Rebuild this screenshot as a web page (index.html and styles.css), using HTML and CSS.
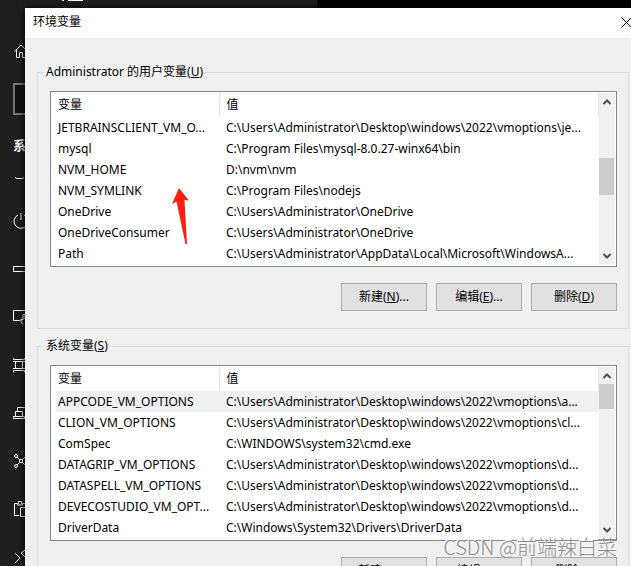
FILE: index.html
```html
<!DOCTYPE html>
<html lang="zh-CN">
<head>
<meta charset="utf-8">
<title>环境变量</title>
<link rel="stylesheet" href="styles.css">
</head>
<body>
<div class="desktop">
  <nav class="settings" aria-label="设置">
    <div class="app-name"><svg width="24" height="3" viewBox="0 0 24 3"><path d="M0 .5h2M6 .5h15" stroke="#fff" stroke-width="1"/></svg></div>
    <a class="item" href="#" aria-label="主页"><svg viewBox="0 0 16 16"><path d="M1.500 8.500 8 2l6.500 6.500M3.500 7v7.500h3v-5h3v5h3V7"/></svg></a>
    <input class="search" type="text" aria-label="查找设置">
    <h2 class="section">系统</h2>
    <a class="item clipped" href="#" aria-label="声音"><svg viewBox="0 0 16 16"><path d="M2 9.500q1 1 3 1h3q2 0 3-1"/></svg></a>
    <a class="item" href="#" aria-label="电源和睡眠"><svg viewBox="0 0 16 16"><path d="M5 2a7 7 0 1 0 6 0M8 0v7"/></svg></a>
    <a class="item" href="#" aria-label="存储"><svg viewBox="0 0 16 16"><path d="M.5 5.500h15v5H.5z"/></svg></a>
    <a class="item" href="#" aria-label="平板模式"><svg viewBox="0 0 16 16"><path d="M7 11.500H.5v-10h15M10 15.500q-3-3-2-5.500l2 1V6q1-2 2 0v4"/></svg></a>
    <a class="item" href="#" aria-label="多任务处理"><svg viewBox="0 0 16 16"><path d="M.5 1v1.500h11V1M.5 15.500V13.500h11v2M0 4.500h2.500v7H0M2.500 4.500h7v7h-7M12 4.500h-2.500v7H12"/></svg></a>
    <a class="item" href="#" aria-label="投影到此电脑"><svg viewBox="0 0 16 16"><path d="M4.500 6V2.500h11M2.500 11V6.500h7V11M.5 11.500h11v2H.5z"/></svg></a>
    <a class="item" href="#" aria-label="体验共享"><svg viewBox="0 0 16 16"><path d="m4 4 3 3m2 2 3 3M12 4 9 7M7 9l-3 3M6.500 6.500h3v3h-3z"/><circle cx="3" cy="3" r="1.500"/><circle cx="3" cy="13" r="1.500"/></svg></a>
    <a class="item" href="#" aria-label="剪贴板"><svg viewBox="0 0 16 16"><path d="M6 14.500H1.500v-12H4m6 0h2.500V6M4.500 4V2.500h1v-2h3v2h1V4zM7.500 6.500h7v9h-7z"/></svg></a>
    <a class="item" href="#" aria-label="远程桌面"><svg viewBox="0 0 16 16"><path d="m2 4 5 5-5 5M12 1 8 4l4 4"/></svg></a>
  </nav>

  <main class="dialog" role="dialog" aria-labelledby="title">
    <header class="titlebar">
      <h1 id="title">环境变量</h1>
      <button class="close" type="button" aria-label="关闭"><svg viewBox="0 0 11 11"><path d="m.5.5 10 10m0-10-10 10"/></svg></button>
    </header>
    <div class="content">
      <fieldset class="group">
        <legend>Administrator 的用户变量(<u>U</u>)</legend>
        <div class="list">
          <table>
            <thead><tr><th scope="col">变量</th><th scope="col">值</th></tr></thead>
            <tbody>
              <tr><td>JETBRAINSCLIENT_VM_O...</td><td>C:\Users\Administrator\Desktop\windows\2022\vmoptions\je...</td></tr>
              <tr><td>mysql</td><td>C:\Program Files\mysql-8.0.27-winx64\bin</td></tr>
              <tr><td>NVM_HOME</td><td>D:\nvm\nvm</td></tr>
              <tr><td>NVM_SYMLINK</td><td>C:\Program Files\nodejs</td></tr>
              <tr><td>OneDrive</td><td>C:\Users\Administrator\OneDrive</td></tr>
              <tr><td>OneDriveConsumer</td><td>C:\Users\Administrator\OneDrive</td></tr>
              <tr><td>Path</td><td>C:\Users\Administrator\AppData\Local\Microsoft\WindowsA...</td></tr>
            </tbody>
          </table>
          <div class="scrollbar">
            <button type="button" aria-label="向上滚动"><svg viewBox="0 0 8 6"><path d="M.5 5 4 1.500 7.500 5"/></svg></button>
            <div class="track"><div class="thumb middle"></div></div>
            <button type="button" aria-label="向下滚动"><svg viewBox="0 0 8 6"><path d="M.5 1 4 4.500 7.500 1"/></svg></button>
          </div>
          <svg class="arrow" viewBox="0 0 18 57"><path fill="#ff1e10" d="M7 0 17 12.500 12.500 12 15 56H13.500L4.500 13.500 0 16z"/></svg>
        </div>
        <div class="actions">
          <button type="button">新建(<u>N</u>)...</button>
          <button type="button">编辑(<u>E</u>)...</button>
          <button type="button">删除(<u>D</u>)</button>
        </div>
      </fieldset>

      <fieldset class="group">
        <legend>系统变量(<u>S</u>)</legend>
        <div class="list">
          <table>
            <thead><tr><th scope="col">变量</th><th scope="col">值</th></tr></thead>
            <tbody>
              <tr class="selected"><td>APPCODE_VM_OPTIONS</td><td>C:\Users\Administrator\Desktop\windows\2022\vmoptions\a...</td></tr>
              <tr><td>CLION_VM_OPTIONS</td><td>C:\Users\Administrator\Desktop\windows\2022\vmoptions\cl...</td></tr>
              <tr><td>ComSpec</td><td>C:\WINDOWS\system32\cmd.exe</td></tr>
              <tr><td>DATAGRIP_VM_OPTIONS</td><td>C:\Users\Administrator\Desktop\windows\2022\vmoptions\d...</td></tr>
              <tr><td>DATASPELL_VM_OPTIONS</td><td>C:\Users\Administrator\Desktop\windows\2022\vmoptions\d...</td></tr>
              <tr><td>DEVECOSTUDIO_VM_OPT...</td><td>C:\Users\Administrator\Desktop\windows\2022\vmoptions\d...</td></tr>
              <tr><td>DriverData</td><td>C:\Windows\System32\Drivers\DriverData</td></tr>
            </tbody>
          </table>
          <div class="scrollbar">
            <button type="button" aria-label="向上滚动"><svg viewBox="0 0 8 6"><path d="M.5 5 4 1.500 7.500 5"/></svg></button>
            <div class="track"><div class="thumb top"></div></div>
            <button type="button" aria-label="向下滚动"><svg viewBox="0 0 8 6"><path d="M.5 1 4 4.500 7.500 1"/></svg></button>
          </div>
        </div>
        <div class="actions">
          <button type="button">新建(<u>W</u>)...</button>
          <button type="button">编辑(<u>I</u>)...</button>
          <button type="button">删除(<u>L</u>)</button>
        </div>
      </fieldset>
    </div>
  </main>
  <p class="watermark">CSDN @前端辣白菜</p>
</div>
</body>
</html>
```

FILE: styles.css
```css
* {
  box-sizing: border-box;
}

body {
  margin: 0;
  color: #000;
  font: 12px/20px "Noto Sans", "Noto Sans CJK SC", sans-serif;
}

.desktop {
  position: relative;
  height: 100vh;
  overflow: hidden;
  background: #000;
}

/* Settings window behind the dialog */
.settings {
  display: flex;
  flex-direction: column;
  width: 317px;
  min-height: 100%;
  padding-left: 13px;
  background: #1f1f1f;
  color: #fff;
}

.settings svg {
  display: block;
  fill: none;
  stroke: #fff;
}

.app-name {
  height: 27px;
  padding-left: 49px;
}

.item {
  display: flex;
  align-items: center;
  height: 48px;
}

.item svg {
  width: 16px;
  height: 16px;
}

.search {
  width: 280px;
  height: 32px;
  margin: 8px 0;
  border: 2px solid #767676;
  background: #121212;
  color: #fff;
}

.section {
  margin: 12px 0 0;
  font-size: 13px;
  line-height: 20px;
}

.clipped {
  height: 42px;
}

/* Dialog */
.dialog {
  position: absolute;
  inset: 8px -10px auto 25px;
  background: #f0f0f0;
  box-shadow: 0 0 8px #000;
}

.titlebar {
  display: flex;
  align-items: center;
  justify-content: space-between;
  height: 30px;
  padding: 0 9px 2px 8px;
  background: #fff;
}

.titlebar h1 {
  margin: 0;
  font-size: 12px;
  font-weight: 400;
}

.close {
  padding: 0;
  border: 0;
  background: none;
}

.close svg {
  display: block;
  width: 11px;
  height: 11px;
  stroke: #000;
}

.content {
  display: grid;
  gap: 7px;
  padding: 24px 12px 12px;
}

.group {
  min-width: 0;
  margin: 0;
  padding: 9px 11px 17px 12px;
  border: 1px solid #dcdcdc;
}

legend {
  margin-left: -6px;
  padding: 0 2px;
}

.list {
  position: relative;
  display: flex;
  padding: 0 1px 2px 5px;
  border: 1px solid #828790;
  background: #fff;
}

table {
  flex: 1;
  min-width: 0;
  table-layout: fixed;
  border-collapse: collapse;
}

th,
td {
  height: 21px;
  padding: 0 2px;
  font-weight: 400;
  text-align: left;
  white-space: nowrap;
}

th {
  height: 25px;
  border-right: 1px solid #e5e5e5;
}

th:first-child {
  width: 163px;
}

th + th,
td + td {
  padding-left: 7px;
}

.selected {
  background: #f0f0f0;
}

.scrollbar {
  display: flex;
  flex-direction: column;
  width: 16px;
  margin-top: 1px;
  background: #f0f0f0;
}

.scrollbar button {
  display: grid;
  place-items: center;
  height: 17px;
  padding: 0;
  border: 0;
  background: none;
}

.scrollbar svg {
  width: 8px;
  height: 6px;
  fill: none;
  stroke: #505050;
  stroke-width: 2;
}

.track {
  flex: 1;
}

.thumb {
  width: 15px;
  background: #cdcdcd;
}

.thumb.top {
  height: 25px;
}

.thumb.middle {
  height: 37px;
  margin-top: 48px;
}

.arrow {
  position: absolute;
  top: 96px;
  left: 121px;
  width: 18px;
  height: 57px;
}

.actions {
  display: flex;
  justify-content: flex-end;
  gap: 9px;
  margin-top: 16px;
}

.actions button {
  width: 86px;
  height: 28px;
  padding: 0;
  border: 1px solid #adadad;
  background: #e1e1e1;
  color: inherit;
  font: inherit;
}

.watermark {
  position: absolute;
  right: 14px;
  bottom: 6px;
  margin: 0;
  color: #8c8c8c;
  font: 300 20px/26px "Noto Sans CJK SC", sans-serif;
  text-shadow: -1px -1px 0 #fff;
}
```
